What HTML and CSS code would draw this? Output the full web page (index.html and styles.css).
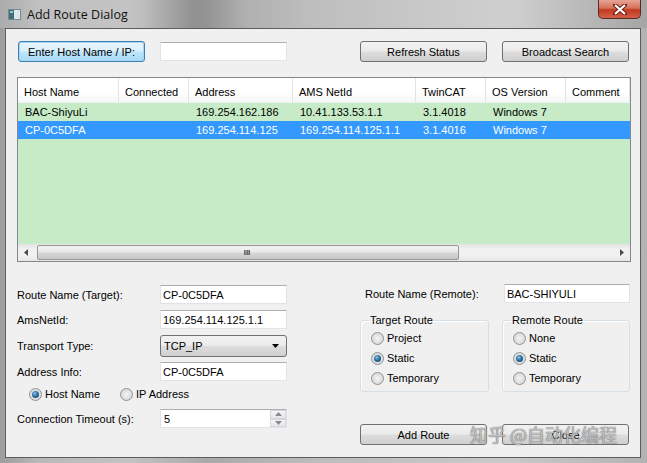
FILE: index.html
```html
<!DOCTYPE html>
<html lang="en">
<head>
    <meta charset="UTF-8">
    <title>Add Route Dialog</title>
    <link rel="stylesheet" href="styles.css">
</head>
<body>

<div class="window">
    <!-- Title bar -->
    <div class="titlebar">
        <svg class="title-icon" width="13" height="11" viewBox="0 0 13 11">
            <rect x="0.5" y="0.5" width="12" height="10" fill="#dfe6ea" stroke="#7a8a94"/>
            <rect x="1" y="1" width="5" height="9" fill="#3f6e78"/>
            <rect x="2" y="2" width="3" height="2" fill="#9fc6cc"/>
        </svg>
        <span class="title-text">Add Route Dialog</span>
        <div class="close-btn">
            <svg width="14" height="11" viewBox="0 0 14 11">
                <path d="M2 1 L12 10 M12 1 L2 10" stroke="#6b1d16" stroke-width="4" stroke-linecap="square"/>
                <path d="M2 1 L12 10 M12 1 L2 10" stroke="#ffffff" stroke-width="2.2"/>
            </svg>
        </div>
    </div>

    <div class="client">
        <!-- Top buttons -->
        <div class="toolbar">
            <button class="btn btn-default btn-host">Enter Host Name / IP:</button>
            <div class="textbox host-input"></div>
            <button class="btn btn-refresh">Refresh Status</button>
            <button class="btn btn-broadcast">Broadcast Search</button>
        </div>

        <!-- Route list -->
        <div class="list">
            <div class="row list-head">
                <div class="cell">Host Name</div>
                <div class="cell">Connected</div>
                <div class="cell">Address</div>
                <div class="cell">AMS NetId</div>
                <div class="cell">TwinCAT</div>
                <div class="cell">OS Version</div>
                <div class="cell">Comment</div>
            </div>
            <div class="list-body">
                <div class="row list-row">
                    <div class="cell">BAC-ShiyuLi</div>
                    <div class="cell"></div>
                    <div class="cell">169.254.162.186</div>
                    <div class="cell">10.41.133.53.1.1</div>
                    <div class="cell">3.1.4018</div>
                    <div class="cell">Windows 7</div>
                    <div class="cell"></div>
                </div>
                <div class="row list-row selected">
                    <div class="cell">CP-0C5DFA</div>
                    <div class="cell"></div>
                    <div class="cell">169.254.114.125</div>
                    <div class="cell">169.254.114.125.1.1</div>
                    <div class="cell">3.1.4016</div>
                    <div class="cell">Windows 7</div>
                    <div class="cell"></div>
                </div>
            </div>
            <div class="hscroll">
                <svg class="arrow" width="17" height="17" viewBox="0 0 17 17"><path d="M10 5 L6 8.5 L10 12 Z" fill="#4d4d4d"/></svg>
                <div class="thumb"><span class="grip">III</span></div>
                <div class="track"></div>
                <svg class="arrow" width="17" height="17" viewBox="0 0 17 17"><path d="M7 5 L11 8.5 L7 12 Z" fill="#4d4d4d"/></svg>
            </div>
        </div>

        <!-- Route settings -->
        <div class="form">
            <div class="form-left">
                <div class="field f1">
                    <span class="label">Route Name (Target):</span>
                    <div class="textbox">CP-0C5DFA</div>
                </div>
                <div class="field f2">
                    <span class="label">AmsNetId:</span>
                    <div class="textbox">169.254.114.125.1.1</div>
                </div>
                <div class="field f3">
                    <span class="label">Transport Type:</span>
                    <div class="combo">
                        <span>TCP_IP</span>
                        <svg width="7" height="4" viewBox="0 0 7 4"><path d="M0 0 H7 L3.5 4 Z" fill="#000"/></svg>
                    </div>
                </div>
                <div class="field f4">
                    <span class="label">Address Info:</span>
                    <div class="textbox">CP-0C5DFA</div>
                </div>
                <div class="radio-row">
                    <label class="option opt-host"><span class="radio on"></span>Host Name</label>
                    <label class="option"><span class="radio"></span>IP Address</label>
                </div>
                <div class="field f5">
                    <span class="label">Connection Timeout (s):</span>
                    <div class="textbox spin">
                        <span>5</span>
                        <div class="spin-btns">
                            <div class="spin-btn"><svg width="7" height="4" viewBox="0 0 7 4"><path d="M0 4 L3.5 0 L7 4 Z" fill="#8a8a8a"/></svg></div>
                            <div class="spin-btn"><svg width="7" height="4" viewBox="0 0 7 4"><path d="M0 0 L3.5 4 L7 0 Z" fill="#8a8a8a"/></svg></div>
                        </div>
                    </div>
                </div>
            </div>

            <div class="form-right">
                <div class="field">
                    <span class="label label-remote">Route Name (Remote):</span>
                    <div class="textbox remote-input">BAC-SHIYULI</div>
                </div>
                <div class="groups">
                    <fieldset class="group">
                        <legend>Target Route</legend>
                        <label class="option"><span class="radio"></span>Project</label>
                        <label class="option"><span class="radio on"></span>Static</label>
                        <label class="option"><span class="radio"></span>Temporary</label>
                    </fieldset>
                    <fieldset class="group group-remote">
                        <legend>Remote Route</legend>
                        <label class="option"><span class="radio"></span>None</label>
                        <label class="option"><span class="radio on"></span>Static</label>
                        <label class="option"><span class="radio"></span>Temporary</label>
                    </fieldset>
                </div>
                <div class="actions">
                    <button class="btn">Add Route</button>
                    <button class="btn btn-close">Close</button>
                </div>
            </div>
        </div>
    </div>

    <div class="watermark">知乎 @自动化编程</div>
</div>

</body>
</html>
```

FILE: styles.css
```css
* {
    box-sizing: border-box;
}

body {
    margin: 0;
    background-color: #a8a8a8;
    font-family: "Liberation Sans", Arial, sans-serif;
    font-size: 11px;
    color: #000;
}

.window {
    position: relative;
    width: 647px;
    height: 463px;
    overflow: hidden;
    background: linear-gradient(to right, #9d9d9d 0%, #b9b9b9 6%, #c3c3c3 20%, #a9a9a9 32%, #bcbcbc 48%, #c9c9c9 78%, #b3b3b3 100%);
}

/* Title bar */
.titlebar {
    position: relative;
    display: flex;
    align-items: center;
    height: 28px;
    background: linear-gradient(to right, rgba(255,255,255,0.15), rgba(255,255,255,0) 22%, rgba(60,60,60,0.25) 30%, rgba(255,255,255,0) 38%, rgba(255,255,255,0.12) 80%, rgba(0,0,0,0.08));
}

.title-icon {
    margin-left: 8px;
    margin-top: 1px;
}

.title-text {
    margin-left: 6px;
    font-family: "Open Sans", "Noto Sans", sans-serif;
    font-size: 12.5px;
    color: #111;
}

.close-btn {
    align-self: flex-start;
    margin-left: auto;
    margin-right: 6px;
    width: 43px;
    height: 19px;
    display: flex;
    align-items: center;
    justify-content: center;
    border: 1px solid #5a2a24;
    border-top: none;
    border-radius: 0 0 5px 5px;
    background: linear-gradient(to bottom, #e8a493 0%, #d5705a 45%, #c2381f 55%, #d3604a 100%);
}

/* Client area */
.client {
    margin: 0 6px 0 5px;
    height: 430px;
    border: 1px solid #5b5b5b;
    background-color: #f0f0f0;
    padding: 12px 9px 0 11px;
}

.toolbar {
    display: flex;
    height: 21px;
}

.btn {
    width: 127px;
    height: 21px;
    padding: 0;
    font-family: "Liberation Sans", Arial, sans-serif;
    font-size: 11px;
    color: #000;
    border: 1px solid #707070;
    border-radius: 3px;
    background: linear-gradient(to bottom, #f2f2f2 0%, #ebebeb 48%, #dddddd 52%, #cfcfcf 100%);
}

.btn-default {
    border-color: #3c7fb1;
    box-shadow: inset 0 0 0 1px #a6d6f2;
    background: linear-gradient(to bottom, #eaf6fd 0%, #d9f0fc 48%, #bee6fd 52%, #a7d9f5 100%);
}

.btn-host {
    margin-left: 1px;
}

.btn-refresh {
    margin-left: 73px;
}

.btn-broadcast {
    margin-left: 15px;
}

.textbox {
    display: flex;
    align-items: center;
    width: 127px;
    height: 19px;
    padding-left: 2px;
    background-color: #fff;
    border: 1px solid #e2e3ea;
    border-top-color: #abadb3;
    white-space: nowrap;
}

.host-input {
    margin-top: 1px;
    margin-left: 15px;
    height: 19px;
}

/* Route list */
.list {
    display: flex;
    flex-direction: column;
    margin-top: 15px;
    width: 614px;
    height: 185px;
    border: 1px solid #828790;
    background-color: #fff;
}

.row {
    display: grid;
    grid-template-columns: 101px 70px 104px 123px 70px 80px 1fr;
}

.cell {
    padding-left: 7px;
    white-space: nowrap;
    overflow: hidden;
}

.list-head {
    height: 25px;
    align-items: center;
    background: linear-gradient(to bottom, #ffffff 0%, #ffffff 60%, #f5f6f7 100%);
    border-bottom: 1px solid #eef0f2;
}

.list-head .cell {
    height: 100%;
    display: flex;
    align-items: center;
    padding-top: 3px;
    border-right: 1px solid #e3e4e6;
    padding-left: 6px;
}

.list-body {
    flex: 1;
    background-color: #c6ebc6;
}

.list-row {
    height: 18px;
    align-items: center;
}

.list-row.selected {
    background-color: #3399ff;
    color: #fff;
}

.hscroll {
    display: flex;
    align-items: center;
    height: 17px;
    background: linear-gradient(to bottom, #e3e3e3, #f1f1f1 30%, #f1f1f1 70%, #e6e6e6);
}

.thumb {
    position: relative;
    width: 422px;
    height: 15px;
    margin-left: 2px;
    border: 1px solid #979797;
    border-radius: 2px;
    background: linear-gradient(to bottom, #f3f3f3 0%, #e8e8e8 45%, #d6d6d6 55%, #c6c6c6 100%);
    display: flex;
    align-items: center;
    justify-content: center;
}

.grip {
    font-size: 8px;
    font-weight: bold;
    color: #3d3d3d;
    padding-right: 2px;
}

.track {
    flex: 1;
}

/* Form */
.form {
    display: flex;
    margin-top: 22px;
}

.form-left {
    width: 271px;
}

.form-right {
    width: 270px;
    margin-left: 72px;
}

.field {
    display: flex;
    align-items: center;
}

.label {
    width: 143px;
}

.f1 {
    margin-top: 1px;
}

.f2,
.f3 {
    margin-top: 6px;
}

.f4 {
    margin-top: 5px;
}

.f5 {
    margin-top: 2px;
}

.combo {
    display: flex;
    align-items: center;
    justify-content: space-between;
    width: 127px;
    height: 22px;
    padding: 0 7px 0 3px;
    border: 1px solid #707070;
    border-radius: 3px;
    background: linear-gradient(to bottom, #f2f2f2 0%, #ebebeb 48%, #dddddd 52%, #cfcfcf 100%);
}

.radio-row {
    display: flex;
    align-items: center;
    height: 26px;
    padding-left: 12px;
}

.option {
    display: flex;
    align-items: center;
    height: 20px;
}

.opt-host {
    width: 91px;
}

.radio {
    position: relative;
    width: 13px;
    height: 13px;
    margin-right: 3px;
    border-radius: 50%;
    border: 1px solid #929292;
    background: radial-gradient(circle at 50% 50%, #f2f2f2 0%, #e1e1e1 50%, #cfcfcf 100%);
}

.radio.on::after {
    content: "";
    position: absolute;
    left: 2px;
    top: 2px;
    width: 7px;
    height: 7px;
    border-radius: 50%;
    background: radial-gradient(circle at 40% 35%, #8cc7f0 0%, #2c6f9f 45%, #123f63 100%);
}

.spin {
    justify-content: space-between;
    padding-left: 3px;
    padding-right: 0;
}

.spin-btns {
    display: flex;
    flex-direction: column;
    height: 100%;
    width: 16px;
}

.spin-btn {
    flex: 1;
    display: flex;
    align-items: center;
    justify-content: center;
    border: 1px solid #d3d6dc;
    background: linear-gradient(to bottom, #f6f6f6, #e6e6e6);
}

/* Right side */
.label-remote {
    width: 141px;
    margin-left: 5px;
}

.remote-input {
    width: 128px;
}

.groups {
    display: flex;
    margin-top: 11px;
}

.group {
    width: 129px;
    height: 78px;
    margin: 0;
    padding: 1px 0 0 10px;
    border: 1px solid #d5dfe5;
    border-radius: 3px;
    box-shadow: inset 1px 1px 0 #fff;
}

.group legend {
    margin-left: -2px;
    padding: 0 1px;
    line-height: 13px;
}

.group-remote {
    width: 128px;
    margin-left: 13px;
}

.actions {
    display: flex;
    margin-top: 32px;
}

.btn-close {
    margin-left: 15px;
}

.watermark {
    position: absolute;
    left: 470px;
    top: 421px;
    font-family: "Noto Sans CJK SC", sans-serif;
    font-size: 18px;
    color: rgba(255, 255, 255, 0.6);
    text-shadow: 0 0 1px rgba(80,80,80,0.8), 0 0 1px rgba(80,80,80,0.8);
    white-space: nowrap;
}
```
